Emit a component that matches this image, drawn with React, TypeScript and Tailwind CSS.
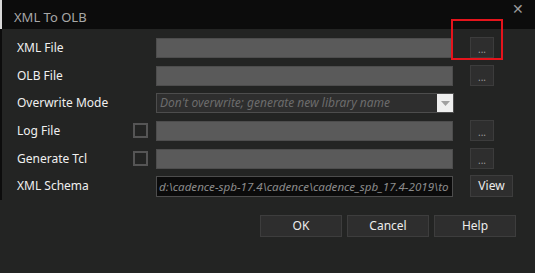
import React from "react"

const font = { fontFamily: '"Noto Sans", "Open Sans", sans-serif' }

function Browse() {
  return (
    <button className="ml-[17px] flex h-[21px] w-[24px] items-end justify-center border border-[#3c3c3c] bg-[#2e2e2e] pb-[3px] text-[10px] leading-none text-[#9a9a9a]">
      ...
    </button>
  )
}

function Check() {
  return <div className="h-[15px] w-[15px] border-2 border-[#555555] bg-[#232423]" />
}

function Row({ label, check, children }: { label: string; check?: boolean; children: React.ReactNode }) {
  return (
    <div className="flex h-[27.7px] items-center">
      <div className="w-[116px] text-[12px] text-[#f0f0f0]">{label}</div>
      <div className="flex w-[23px] items-center">{check && <Check />}</div>
      {children}
    </div>
  )
}

function FileInput() {
  return <div className="h-[20px] w-[297px] border border-[#4d4d4d] bg-[#5a5a5a]" />
}

function DialogButton({ label }: { label: string }) {
  return (
    <button className="flex h-[22px] w-[82px] items-center justify-center border border-[#3d3d3d] bg-[#2e2e2e] text-[12px] text-[#ececec]">
      {label}
    </button>
  )
}

export default function App() {
  return (
    <div className="relative h-[273px] w-[535px] overflow-hidden bg-[#232423]" style={font}>
      {/* Title bar */}
      <div className="flex h-[29px] items-center justify-between border-l-2 border-[#d8d8d8] bg-[#0c0c0c] pl-[12px] pr-[11px]">
        <span className="mt-[6px] text-[13px] text-[#a8a8a8]">XML To OLB</span>
        <span className="-mt-[12px] text-[14px] leading-none text-[#9a9a9a]">✕</span>
      </div>

      {/* Form */}
      <div className="border-l-2 border-[#0c0c0c] pl-[15px] pt-[5px]">
        <Row label="XML File">
          <FileInput />
          <Browse />
        </Row>
        <Row label="OLB File">
          <FileInput />
          <Browse />
        </Row>
        <Row label="Overwrite Mode">
          <div className="flex h-[20px] w-[298px] items-center border border-[#4d4d4d] bg-[#2e2e2e]">
            <span className="flex-1 truncate pl-[3px] text-[12px] italic text-[#6c6c6c]">
              Don't overwrite; generate new library name
            </span>
            <div className="flex h-[18px] w-[16px] items-center justify-center bg-[#efefef]">
              <svg width="9" height="5" viewBox="0 0 9 5">
                <path d="M0 0h9L4.5 5z" fill="#a0a0a0" />
              </svg>
            </div>
          </div>
        </Row>
        <Row label="Log File" check>
          <FileInput />
          <Browse />
        </Row>
        <Row label="Generate Tcl" check>
          <FileInput />
          <Browse />
        </Row>
        <Row label="XML Schema">
          <div className="flex h-[21px] w-[297px] items-center overflow-hidden border border-[#4d4d4d] bg-[#0b0b0b]">
            <span className="whitespace-nowrap pl-[2px] text-[11.6px] italic text-[#8c8c8c]">
              d:\cadence-spb-17.4\cadence\cadence_spb_17.4-2019\to
            </span>
          </div>
          <button className="ml-[17px] flex h-[22px] w-[43px] items-center justify-center border border-[#3d3d3d] bg-[#2e2e2e] text-[12px] text-[#ececec]">
            View
          </button>
        </Row>
      </div>

      {/* Dialog buttons */}
      <div className="mt-[15px] flex justify-end gap-[5px] pr-[19px]">
        <DialogButton label="OK" />
        <DialogButton label="Cancel" />
        <DialogButton label="Help" />
      </div>

      {/* Annotation */}
      <div className="absolute left-[451px] top-[19px] h-[41px] w-[52px] border-2 border-[#e5141c]" />
    </div>
  )
}
